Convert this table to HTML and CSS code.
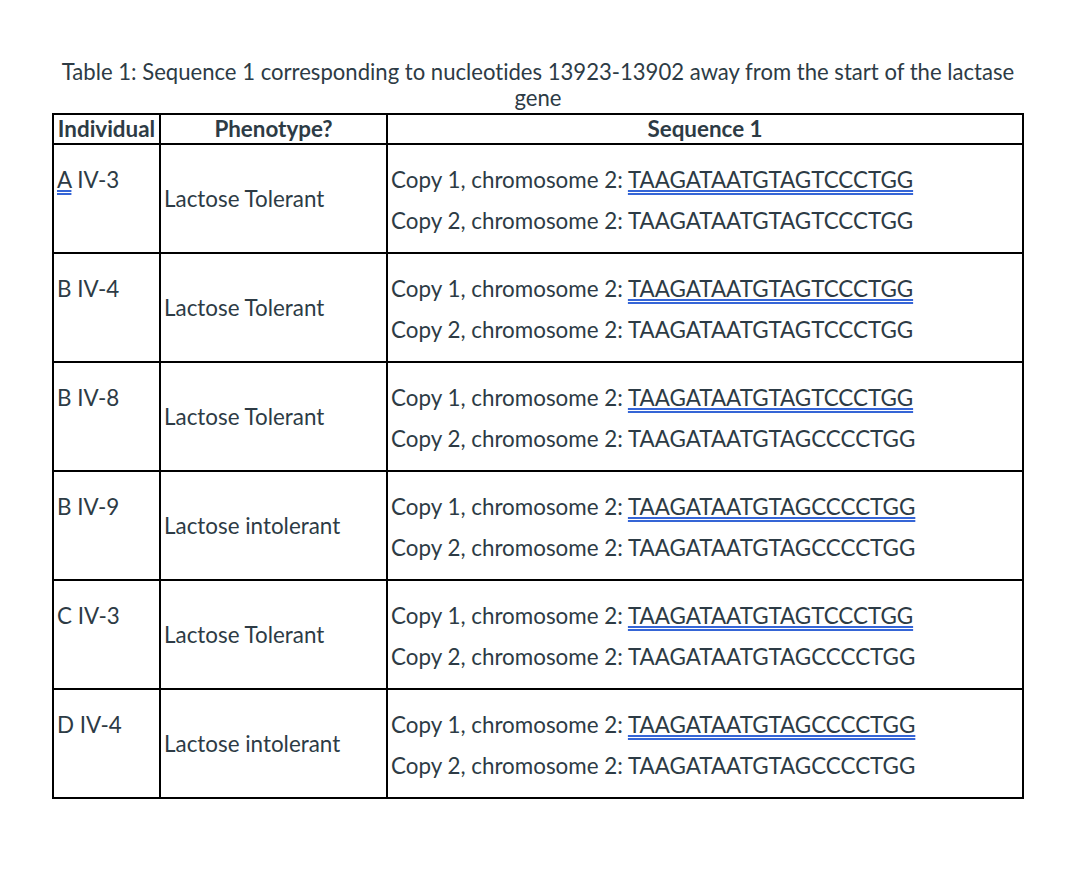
FILE: index.html
```html
<!DOCTYPE html>
<html>
<head>
<meta charset="utf-8">
<link rel="stylesheet" href="styles.css">
</head>
<body>
<div class="page">
  <p class="caption">Table 1: Sequence 1 corresponding to nucleotides 13923-13902 away from the start of the lactase gene</p>
  <table class="data">
    <colgroup>
      <col class="c1"><col class="c2"><col class="c3">
    </colgroup>
    <thead>
      <tr class="head">
        <th>Individual</th>
        <th>Phenotype?</th>
        <th>Sequence 1</th>
      </tr>
    </thead>
    <tbody>
      <tr class="row">
        <td class="ind"><span class="dbl">A</span> IV-3</td>
        <td class="phen">Lactose Tolerant</td>
        <td class="seq"><p>Copy 1, chromosome 2: <span class="dbl">TAAGATAATGTAGTCCCTGG</span></p><p>Copy 2, chromosome 2: TAAGATAATGTAGTCCCTGG</p></td>
      </tr>
      <tr class="row">
        <td class="ind">B IV-4</td>
        <td class="phen">Lactose Tolerant</td>
        <td class="seq"><p>Copy 1, chromosome 2: <span class="dbl">TAAGATAATGTAGTCCCTGG</span></p><p>Copy 2, chromosome 2: TAAGATAATGTAGTCCCTGG</p></td>
      </tr>
      <tr class="row">
        <td class="ind">B IV-8</td>
        <td class="phen">Lactose Tolerant</td>
        <td class="seq"><p>Copy 1, chromosome 2: <span class="dbl">TAAGATAATGTAGTCCCTGG</span></p><p>Copy 2, chromosome 2: TAAGATAATGTAGCCCCTGG</p></td>
      </tr>
      <tr class="row">
        <td class="ind">B IV-9</td>
        <td class="phen">Lactose intolerant</td>
        <td class="seq"><p>Copy 1, chromosome 2: <span class="dbl">TAAGATAATGTAGCCCCTGG</span></p><p>Copy 2, chromosome 2: TAAGATAATGTAGCCCCTGG</p></td>
      </tr>
      <tr class="row">
        <td class="ind">C IV-3</td>
        <td class="phen">Lactose Tolerant</td>
        <td class="seq"><p>Copy 1, chromosome 2: <span class="dbl">TAAGATAATGTAGTCCCTGG</span></p><p>Copy 2, chromosome 2: TAAGATAATGTAGCCCCTGG</p></td>
      </tr>
      <tr class="row">
        <td class="ind">D IV-4</td>
        <td class="phen">Lactose intolerant</td>
        <td class="seq"><p>Copy 1, chromosome 2: <span class="dbl">TAAGATAATGTAGCCCCTGG</span></p><p>Copy 2, chromosome 2: TAAGATAATGTAGCCCCTGG</p></td>
      </tr>
    </tbody>
  </table>
</div>
</body>
</html>
```
FILE: styles.css
```css
html, body {
  margin: 0;
  padding: 0;
  background: #ffffff;
}
body {
  font-family: Lato, "Open Sans", sans-serif;
  color: #2d3b45;
  font-variant-ligatures: none;
}
.page {
  padding: 59px 0 0 52px;
  width: 972px;
}
.caption {
  margin: 0 0 2px 0;
  font-size: 22.1px;
  line-height: 26px;
  text-align: center;
}
.data {
  border-collapse: collapse;
  table-layout: fixed;
  width: 972px;
  font-size: 22.4px;
}
.c1 { width: 107px; }
.c2 { width: 227px; }
.c3 { width: 636px; }
.data th, .data td {
  border: 2px solid #000;
  padding: 0 3px;
  box-sizing: border-box;
}
.head {
  height: 30px;
}
.data th {
  font-weight: 700;
  line-height: 26px;
  text-align: center;
  white-space: nowrap;
}
.data th:first-child {
  padding: 0 1px;
}
.row {
  height: 109px;
}
.data td {
  line-height: 41px;
}
.ind {
  vertical-align: top;
  padding-top: 14px !important;
}
.phen {
  vertical-align: middle;
  line-height: 26px !important;
}
.seq {
  vertical-align: top;
  padding-top: 14px !important;
}
.seq p {
  margin: 0;
  white-space: nowrap;
}
.dbl {
  text-decoration: underline double #3565d6;
  text-decoration-thickness: 1.5px;
  text-underline-offset: 2px;
}
```
